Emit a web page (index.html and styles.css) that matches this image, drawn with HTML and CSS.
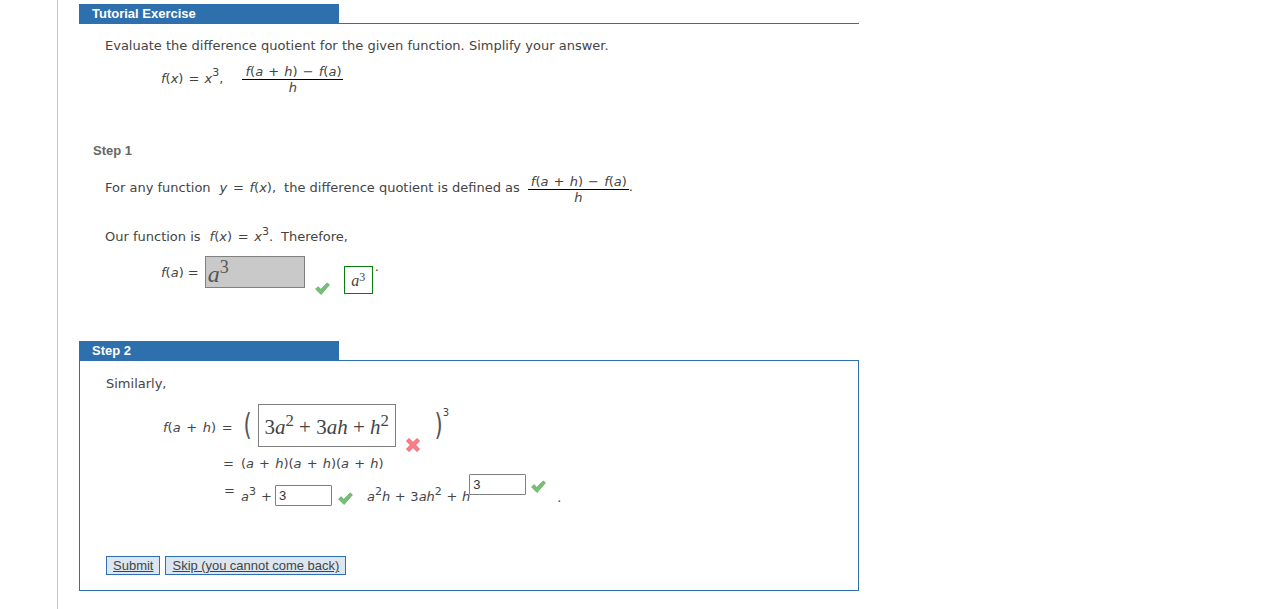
FILE: index.html
```html
<!DOCTYPE html>
<html lang="en">
<head>
<meta charset="utf-8">
<title>Tutorial Exercise</title>
<link rel="stylesheet" href="styles.css">
</head>
<body>
<main class="page">
  <section class="intro">
    <div class="tabbar"><h2 class="tab">Tutorial Exercise</h2></div>
    <p class="text prompt">Evaluate the difference quotient for the given function. Simplify your answer.</p>
    <div class="math given">
      <span class="raised"><i>f</i>(<i>x</i>) = <i>x</i><sup>3</sup>,</span>
      <span class="frac"><span class="num"><i>f</i>(<i>a</i> + <i>h</i>) &minus; <i>f</i>(<i>a</i>)</span><span class="den"><i>h</i></span></span>
    </div>
  </section>

  <section class="step1">
    <h3 class="steplabel">Step 1</h3>
    <div class="text defline">
      <span class="raised">For any function</span><span class="m raised"><i>y</i> = <i>f</i>(<i>x</i>),</span><span class="raised">the difference quotient is defined as</span>
      <span class="frac"><span class="num"><i>f</i>(<i>a</i> + <i>h</i>) &minus; <i>f</i>(<i>a</i>)</span><span class="den"><i>h</i></span></span><span class="dot">.</span>
    </div>
    <div class="text ourline">
      <span>Our function is</span><span class="m"><i>f</i>(<i>x</i>) = <i>x</i><sup>3</sup>.</span><span>Therefore,</span>
    </div>
    <div class="answerline">
      <span class="lhs"><i>f</i>(<i>a</i>) =</span>
      <span class="graybox"><i>a</i><sup>3</sup></span>
      <svg class="check checklow" viewBox="0 0 16 14"><path d="M0.5 7.5 L3.5 5 L6 8 L13 1 L15.5 3 L6.5 13.5 Z"/></svg>
      <span class="greenbox"><i>a</i><sup>3</sup></span><span class="topdot">.</span>
    </div>
  </section>

  <section class="step2">
    <div class="tabbar"><h2 class="tab">Step 2</h2></div>
    <div class="panel">
      <p class="text similarly">Similarly,</p>
      <div class="eq eq1">
        <span class="lhs2"><i>f</i>(<i>a</i> + <i>h</i>) =</span>
        <span class="paren">(</span>
        <span class="bigbox">3<i>a</i><sup>2</sup> + 3<i>ah</i> + <i>h</i><sup>2</sup></span>
        <svg class="cross" viewBox="0 0 14 14"><path d="M3 0.5 L7 4.5 L11 0.5 L13.5 3 L9.5 7 L13.5 11 L11 13.5 L7 9.5 L3 13.5 L0.5 11 L4.5 7 L0.5 3 Z"/></svg>
        <span class="paren closep">)</span><sup class="cube">3</sup>
      </div>
      <div class="eq eq2"><span>=</span><span class="rhs">(<i>a</i> + <i>h</i>)(<i>a</i> + <i>h</i>)(<i>a</i> + <i>h</i>)</span></div>
      <div class="eq eq3">
        <span class="eqs">=</span>
        <span class="t1"><i>a</i><sup>3</sup> +</span>
        <input class="field" type="text" value="3" aria-label="coefficient">
        <svg class="check" viewBox="0 0 16 14"><path d="M0.5 7.5 L3.5 5 L6 8 L13 1 L15.5 3 L6.5 13.5 Z"/></svg>
        <span class="t2"><i>a</i><sup>2</sup><i>h</i> + 3<i>ah</i><sup>2</sup> + <i>h</i></span>
        <input class="field expfield" type="text" value="3" aria-label="exponent">
        <svg class="check checkup" viewBox="0 0 16 14"><path d="M0.5 7.5 L3.5 5 L6 8 L13 1 L15.5 3 L6.5 13.5 Z"/></svg>
        <span class="enddot">.</span>
      </div>
      <div class="buttons">
        <button class="btn" type="button">Submit</button>
        <button class="btn" type="button">Skip (you cannot come back)</button>
      </div>
    </div>
  </section>
</main>
</body>
</html>
```
FILE: styles.css
```css
html, body { margin: 0; padding: 0; background: #fff; }
body { height: 609px; overflow: hidden; font-family: "DejaVu Sans", Verdana, sans-serif; font-size: 13px; color: #444; }
.page { margin-left: 57px; height: 609px; border-left: 1px solid #ccc; padding: 4px 0 0 21px; width: 780px; box-sizing: content-box; }
p, h2, h3 { margin: 0; }
sup { font-size: 85%; line-height: 0; position: relative; vertical-align: baseline; top: -0.55em; }

.tabbar { border-bottom: 1px solid #2e6fad; height: 19px; }
.tab { width: 247px; height: 20px; background: #2e6fad; color: #fff; font: bold 13px/19px "Liberation Sans", Arial, sans-serif; padding-left: 13px; }

.text { font-size: 13px; line-height: 16px; color: #444; }
.prompt { margin: 14px 0 0 26px; word-spacing: 0.1px; }

.math, .defline, .ourline, .answerline { display: flex; align-items: center; }
.given { margin: 10px 0 0 82px; gap: 19px; height: 32px; word-spacing: 1px; }
.raised { margin-bottom: 4px; }
.frac { display: inline-flex; flex-direction: column; align-items: center; line-height: 15px; word-spacing: 1px; }
.num { border-bottom: 1px solid #000; padding: 0 2px 0 3px; }
.den { line-height: 16px; }

.steplabel { margin: 47px 0 0 14px; font: bold 13px/16px "Liberation Sans", Arial, sans-serif; color: #666; }
.defline { margin: 15px 0 0 26px; height: 32px; gap: 8px; }
.m { word-spacing: 1.5px; margin-left: 1px; }
.dot { margin: 0 0 6px -8px; }
.ourline { margin: 21px 0 0 26px; height: 20px; gap: 8px; }

.answerline { margin: 8px 0 0 82px; height: 38px; align-items: flex-start; }
.lhs { margin-top: 10px; }
.graybox { height: 30px; margin: 1px 0 0 6px; border: 1px solid #808080; background: #c9c9c9; font: 24px/34px "Liberation Serif", serif; color: #555; padding-left: 2px; box-sizing: content-box; width: 96px; }
.graybox sup { font-size: 75%; top: -0.5em; }
.check { width: 15px; height: 13px; fill: #74c074; stroke: #559f5a; stroke-width: 0.7; flex: none; }
.checklow { margin: 27px 0 0 10px; }
.greenbox { width: 27px; height: 26px; margin: 11px 0 0 14px; border: 1px solid #0a7a0a; font: 16px/28px "Liberation Serif", serif; color: #444; text-align: center; }
.greenbox sup { font-size: 75%; top: -0.45em; }
.topdot { margin: 1px 0 0 2px; line-height: 22px; }

.step2 { margin-top: 48px; }
.panel { width: 778px; height: 229px; border: 1px solid #2e6fad; border-top: 0; }
.similarly { padding: 15px 0 0 26px; }

.eq { display: flex; align-items: center; }
.eq1 { margin-top: 12px; height: 44px; padding-left: 83px; align-items: flex-start; }
.lhs2 { margin-top: 16px; word-spacing: 1.5px; }
.paren { font: 30px/40px "DejaVu Sans", sans-serif; margin: 1px 0 0 9px; transform: scaleX(0.7); color: #555; width: 10px; }
.bigbox { width: 136px; height: 41px; border: 1px solid #808080; margin-left: 6px; font: 21px/45px "Liberation Serif", serif; color: #444; text-align: center; white-space: nowrap; }
.bigbox sup { font-size: 80%; top: -0.45em; }
.cross { width: 14px; height: 14px; fill: #fb7f86; stroke: #ee4f5a; stroke-width: 0.8; margin: 34px 0 0 10px; flex: none; }
.closep { margin: 1px 0 0 13px; }
.cube { font-size: 10px; top: 0; line-height: 12px; margin: 3px 0 0 0; }
.eq2 { margin-top: 7px; height: 16px; padding-left: 143px; }
.rhs { margin-left: 7px; word-spacing: 1px; }
.eq3 { margin-top: 8px; height: 26px; padding-left: 144px; align-items: flex-start; word-spacing: 1px; }
.eqs { margin-top: 4px; }
.t1 { margin: 10px 0 0 6px; }
.field { width: 57px; height: 21px; box-sizing: border-box; margin: 6px 0 0 3px; padding: 0 3px; border: 1px solid #808080; border-radius: 1px; font: 13px "Liberation Sans", Arial, sans-serif; color: #333; background: #fff; }
.eq3 > .check { margin: 13px 0 0 6px; }
.t2 { margin: 10px 0 0 14px; word-spacing: 0.5px; }
.eq3 > .expfield { margin: -5px 0 0 -1px; }
.eq3 > .checkup { margin: 1px 0 0 5px; }
.enddot { margin: 11px 0 0 11px; }

.buttons { display: flex; gap: 5px; margin-top: 51px; padding-left: 26px; }
.btn { height: 19px; padding: 0 6px; border: 1px solid #2e6fad; border-radius: 0; background: #dce6f1; color: #444; font: 13px/17px "Liberation Sans", Arial, sans-serif; text-decoration: underline; word-spacing: -0.2px; }
```
